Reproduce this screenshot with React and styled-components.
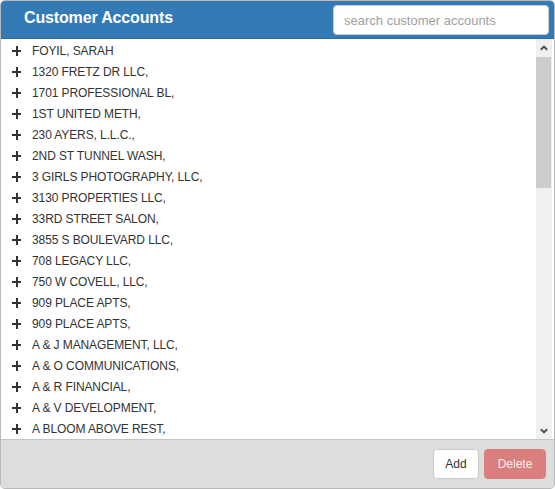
import React from "react";
import styled, { createGlobalStyle } from "styled-components";

const Global = createGlobalStyle`
  html, body { margin: 0; padding: 0; background: #fff; }
  body { font-family: "Liberation Sans", Arial, sans-serif; }
  * { box-sizing: border-box; }
`;

const Panel = styled.div`
  width: 555px;
  height: 489px;
  border: 1px solid #b9b9b9;
  border-radius: 5px;
  overflow: hidden;
  display: flex;
  flex-direction: column;
`;

const Header = styled.div`
  height: 38px;
  flex: none;
  background: #337ab7;
  display: flex;
  align-items: center;
  justify-content: space-between;
  padding: 0 5px 0 23px;
  border-bottom: 1px solid #2e6da4;
`;

const Title = styled.h3`
  margin: 0 0 4px 0;
  color: #fff;
  font-size: 16px;
  font-weight: bold;
  letter-spacing: -0.15px;
`;

const Search = styled.input`
  width: 216px;
  height: 30px;
  margin-top: 1px;
  border: 1px solid #ccc;
  border-radius: 4px;
  padding: 0 10px;
  font-family: "Liberation Sans", Arial, sans-serif;
  font-size: 13px;
  color: #555;
  outline: none;
  &::placeholder { color: #a0a0a0; }
`;

const Body = styled.div`
  flex: 1;
  min-height: 0;
  display: flex;
  background: #fff;
  padding-right: 2px;
`;

const List = styled.ul`
  flex: 1;
  margin: 0;
  padding: 1px 0 0 0;
  list-style: none;
  overflow: hidden;
`;

const ScrollBar = styled.div`
  width: 16px;
  flex: none;
  display: flex;
  flex-direction: column;
  background: #f0f0f0;
`;

const ScrollButton = styled.div`
  height: ${p => p.$h}px;
  flex: none;
  display: flex;
  align-items: center;
  justify-content: center;
`;

const Track = styled.div`
  flex: 1;
`;

const Thumb = styled.div`
  height: 131px;
  width: 15px;
  background: #cdcdcd;
`;

const Row = styled.li`
  height: 21px;
  display: flex;
  align-items: center;
  padding-left: 11px;
  font-size: 12px;
  letter-spacing: -0.1px;
  color: #333;
`;

const Plus = styled.span`
  width: 10px;
  height: 10px;
  margin-right: 10px;
  position: relative;
  display: inline-block;
  &::before, &::after {
    content: "";
    position: absolute;
    background: #333;
  }
  &::before { left: 0; top: 4px; width: 9px; height: 2px; }
  &::after { left: 3.5px; top: 0; width: 2px; height: 10px; }
`;

const Footer = styled.div`
  height: 49px;
  flex: none;
  background: #ddd;
  border-top: 1px solid #c4c4c4;
  display: flex;
  justify-content: flex-end;
  align-items: flex-start;
  gap: 5px;
  padding: 9px 8px 0 0;
`;

const Button = styled.button`
  height: 30px;
  width: ${p => (p.$danger ? "62px" : "46px")};
  padding: 0;
  border-radius: 4px;
  font-family: "Liberation Sans", Arial, sans-serif;
  font-size: 12px;
  border: 1px solid ${p => (p.$danger ? "#d9807f" : "#ccc")};
  background: ${p => (p.$danger ? "#d9807f" : "#fff")};
  color: ${p => (p.$danger ? "#fbeeee" : "#333")};
  cursor: pointer;
`;

const Chevron = ({ down }) => (
  <svg width="8" height="6" viewBox="0 0 8 6">
    <path
      d={down ? "M0.8 1.2 L4 4.4 L7.2 1.2" : "M0.8 4.8 L4 1.6 L7.2 4.8"}
      fill="none"
      stroke="#505050"
      strokeWidth="2"
    />
  </svg>
);

const names = [
  "FOYIL, SARAH",
  "1320 FRETZ DR LLC,",
  "1701 PROFESSIONAL BL,",
  "1ST UNITED METH,",
  "230 AYERS, L.L.C.,",
  "2ND ST TUNNEL WASH,",
  "3 GIRLS PHOTOGRAPHY, LLC,",
  "3130 PROPERTIES LLC,",
  "33RD STREET SALON,",
  "3855 S BOULEVARD LLC,",
  "708 LEGACY LLC,",
  "750 W COVELL, LLC,",
  "909 PLACE APTS,",
  "909 PLACE APTS,",
  "A & J MANAGEMENT, LLC,",
  "A & O COMMUNICATIONS,",
  "A & R FINANCIAL,",
  "A & V DEVELOPMENT,",
  "A BLOOM ABOVE REST,",
];

export default function App() {
  return (
    <>
      <Global />
      <Panel>
        <Header>
          <Title>Customer Accounts</Title>
          <Search placeholder="search customer accounts" />
        </Header>
        <Body>
          <List>
            {names.map((n, i) => (
              <Row key={i}>
                <Plus />
                {n}
              </Row>
            ))}
          </List>
          <ScrollBar>
            <ScrollButton $h={18}>
              <Chevron />
            </ScrollButton>
            <Track>
              <Thumb />
            </Track>
            <ScrollButton $h={17}>
              <Chevron down />
            </ScrollButton>
          </ScrollBar>
        </Body>
        <Footer>
          <Button>Add</Button>
          <Button $danger>Delete</Button>
        </Footer>
      </Panel>
    </>
  );
}
